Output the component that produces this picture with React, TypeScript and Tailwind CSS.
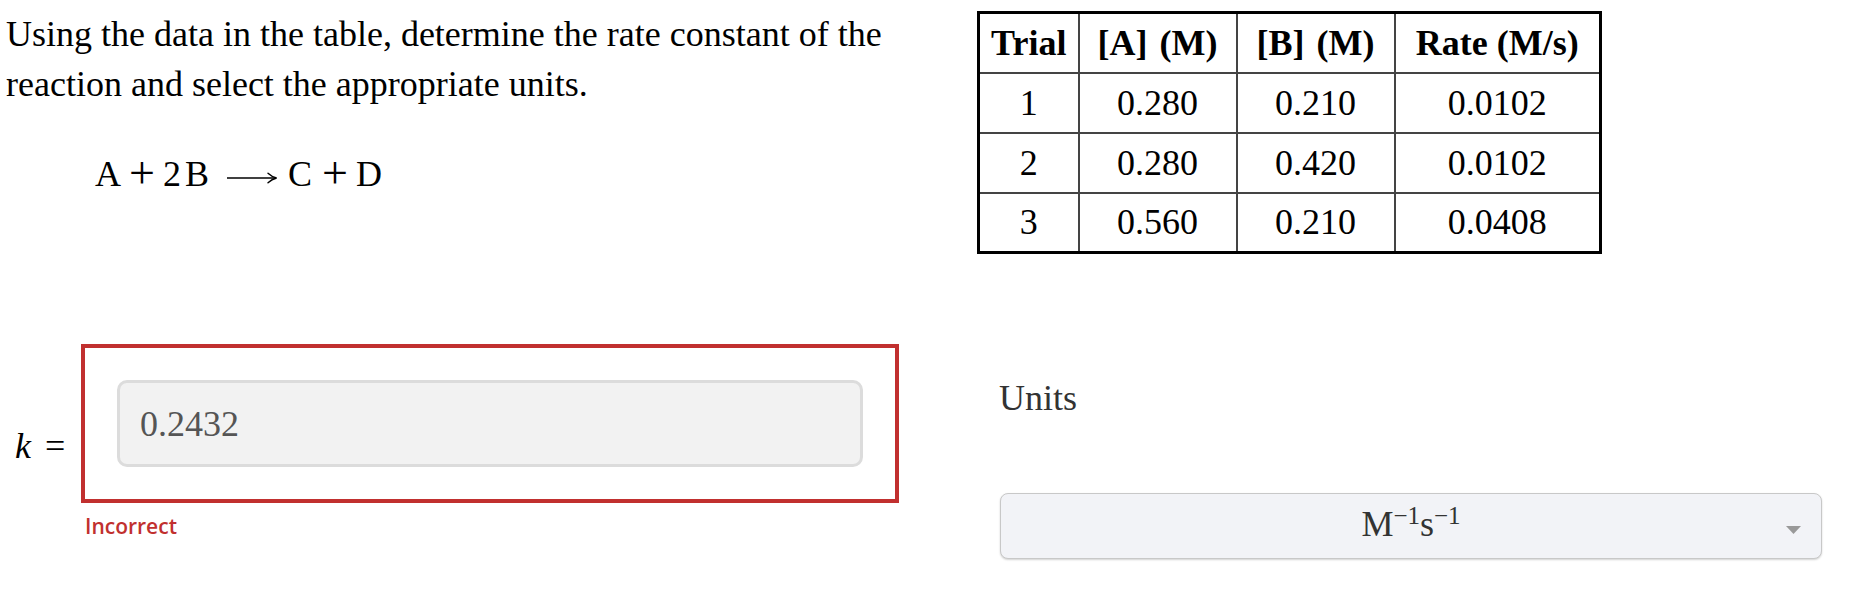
export default function App() {
  const rows = [
    ["1", "0.280", "0.210", "0.0102"],
    ["2", "0.280", "0.420", "0.0102"],
    ["3", "0.560", "0.210", "0.0408"],
  ];

  return (
    <div className="w-[1850px] h-[590px] bg-white text-black font-['Liberation_Serif','Times_New_Roman',serif] flex">
      {/* left column: question, equation, answer box */}
      <div className="w-[977px] flex flex-col">
        <p className="pt-[9px] pl-[6px] w-[926px] text-[36px] leading-[50px]">
          Using the data in the table, determine the rate constant of the reaction and select the appropriate units.
        </p>

        <div className="mt-[37px] pl-[95px] flex items-baseline h-[50px] text-[36px] leading-[50px]">
          <span>A</span>
          <span className="ml-[8px] text-[46px] relative top-[2px]">+</span>
          <span className="ml-[8px]">2</span>
          <span className="ml-[4px]">B</span>
          <svg className="ml-[18px]" width="50" height="16" viewBox="0 0 50 16" fill="none">
            <path d="M0 8H48.5" stroke="#000" strokeWidth="1.4" />
            <path d="M41 3.2C43.8 5.8 46.4 7.2 49.6 8C46.4 8.8 43.8 10.2 41 12.8" stroke="#000" strokeWidth="1.4" strokeLinecap="round" />
          </svg>
          <span className="ml-[11px]">C</span>
          <span className="ml-[10px] text-[46px] relative top-[2px]">+</span>
          <span className="ml-[8px]">D</span>
        </div>

        <div className="mt-[148px] flex">
          <div className="w-[81px] pl-[15px] mt-[77px] flex text-[36px] leading-[50px]">
            <span className="italic">k</span>
            <span className="ml-[14px]">=</span>
          </div>
          <div>
            <div className="w-[818px] h-[159px] border-4 border-[#c1302f] p-[32px]">
              <div className="h-full rounded-[10px] border-[3px] border-[#dcdcdc] bg-[#f2f2f2] flex items-center pl-[20px] text-[36px] text-[#555]">
                0.2432
              </div>
            </div>
            <div className="mt-[9px] pl-[4px] font-['Open_Sans',sans-serif] text-[21px] leading-[28px] font-semibold text-[#c1302f]">
              Incorrect
            </div>
          </div>
        </div>
      </div>

      {/* right column: data table and units select */}
      <div className="flex flex-col items-start">
        <table className="mt-[11px] w-[622px] table-fixed border-collapse border-[3px] border-black text-[36px] text-center">
          <colgroup>
            <col className="w-[100px]" />
            <col className="w-[158px]" />
            <col className="w-[158px]" />
            <col className="w-[206px]" />
          </colgroup>
          <thead>
            <tr className="h-[60px]">
              <th className="p-0 border-2 border-[#444] font-bold">Trial</th>
              <th className="p-0 border-2 border-[#444] font-bold">
                [A]<span className="ml-[12px]">(M)</span>
              </th>
              <th className="p-0 border-2 border-[#444] font-bold">
                [B]<span className="ml-[12px]">(M)</span>
              </th>
              <th className="p-0 border-2 border-[#444] font-bold">Rate (M/s)</th>
            </tr>
          </thead>
          <tbody>
            {rows.map((r) => (
              <tr key={r[0]} className="h-[60px]">
                {r.map((c, i) => (
                  <td key={i} className="p-0 border-2 border-[#444]">
                    {c}
                  </td>
                ))}
              </tr>
            ))}
          </tbody>
        </table>

        <div className="mt-[119px] pl-[22px] text-[36px] leading-[50px] text-[#333]">Units</div>

        <div className="mt-[70px] ml-[23px] w-[822px] h-[66px] relative rounded-[8px] border-[1.5px] border-[#c8c8c8] bg-[#f2f3f7] shadow-[0_1px_2px_rgba(0,0,0,0.18)] flex items-center justify-center pb-[4px] text-[36px] text-[#333]">
          <span>
            M<sup className="text-[25px]">−1</sup>s<sup className="text-[25px]">−1</sup>
          </span>
          <svg className="absolute right-[20px] top-[32px]" width="15" height="8" viewBox="0 0 15 8">
            <path d="M0 0H15L7.5 8Z" fill="#999" />
          </svg>
        </div>
      </div>
    </div>
  );
}
